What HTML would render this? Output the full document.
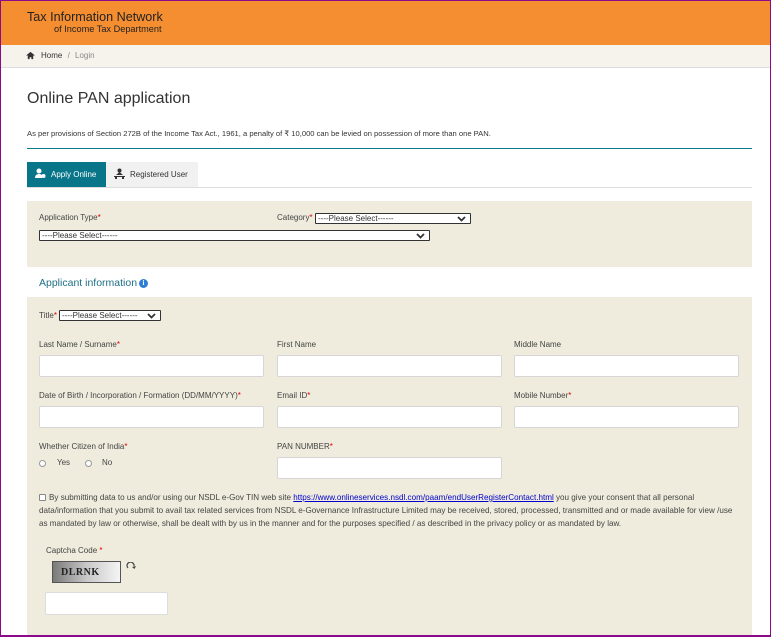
<!DOCTYPE html>
<html><head><meta charset="utf-8"><style>
*{box-sizing:border-box;margin:0;padding:0}
body{width:771px;height:637px;overflow:hidden;background:#fff;font-family:"Liberation Sans",Arial,sans-serif;color:#333;position:relative}
.a{position:absolute}
.frame{position:absolute;left:0;top:0;width:771px;height:637px;border:1px solid #8b0a8b;border-bottom-width:2px;pointer-events:none;z-index:9}
.lbl{position:absolute;font-size:8px;color:#444}
.r{color:#d00}
.inp{position:absolute;height:22px;width:225px;background:#fff;border:1px solid #d6d6d6;border-radius:2px}
.sel{position:absolute;height:11px;border:1px solid #333;background:#fff;font-size:8px;line-height:9px;padding-left:2px;border-radius:1px}
.sel svg{position:absolute;right:4px;top:2px}
</style></head><body>
<div class="a" style="left:0;top:0;width:771px;height:45px;background:#f58e30"></div>
<div class="a" style="left:27px;top:10px;font-size:12.6px;color:#222">Tax Information Network</div>
<div class="a" style="left:54px;top:24px;font-size:9.2px;color:#222">of Income Tax Department</div>
<div class="a" style="left:0;top:45px;width:771px;height:23px;background:#f5f3eb;border-bottom:1px solid #ddd"></div>
<svg class="a" style="left:26px;top:51px" width="9" height="9" viewBox="0 0 10 10"><path d="M0 5L5 1l5 4H8v4H6V7H4v2H2V5z" fill="#333"/></svg>
<div class="a" style="left:41px;top:51px;font-size:8px;color:#333">Home <span style="color:#888;margin:0 3px">/</span> <span style="color:#888">Login</span></div>
<div class="a" style="left:27px;top:90px;font-size:16px;color:#333">Online PAN application</div>
<div class="a" style="left:27px;top:129px;font-size:7.6px;color:#333">As per provisions of Section 272B of the Income Tax Act., 1961, a penalty of ₹ 10,000 can be levied on possession of more than one PAN.</div>
<div class="a" style="left:27px;top:148px;width:725px;height:1px;background:#0b7a8a"></div>
<div class="a" style="left:27px;top:162px;width:79px;height:25px;background:#087589"></div>
<svg class="a" style="left:35px;top:168px" width="11" height="11" viewBox="0 0 11 11"><circle cx="4" cy="3" r="2.5" fill="#fff"/><path d="M0 10c0-3 2-4 4-4s3 1 3 2v2z" fill="#fff"/><circle cx="8.5" cy="8" r="2" fill="#fff"/></svg>
<div class="a" style="left:51px;top:170px;font-size:8px;color:#fff">Apply Online</div>
<div class="a" style="left:106px;top:162px;width:92px;height:25px;background:#f1f1f1"></div>
<svg class="a" style="left:114px;top:168px" width="11" height="11" viewBox="0 0 11 11"><circle cx="5.5" cy="2.5" r="2" fill="#333"/><path d="M2 7l3.5-3 3.5 3zM0 8h11v1H0zM1 9h2v2H1zM8 9h2v2H8z" fill="#333"/></svg>
<div class="a" style="left:130px;top:170px;font-size:8px;color:#333">Registered User</div>
<div class="a" style="left:27px;top:187px;width:725px;height:1px;background:#ddd"></div>
<div class="a" style="left:27px;top:201px;width:725px;height:66px;background:#efecdd"></div>
<div class="lbl" style="left:39px;top:213px">Application Type<span class="r">*</span></div>
<div class="lbl" style="left:277px;top:213px">Category<span class="r">*</span></div>
<div class="sel" style="left:315px;top:213px;width:156px">----Please Select------<svg width="9" height="6" viewBox="0 0 9 6"><path d="M1 1l3.5 3.5L8 1" stroke="#333" stroke-width="1.8" fill="none"/></svg></div>
<div class="sel" style="left:39px;top:230px;width:391px">----Please Select------<svg width="9" height="6" viewBox="0 0 9 6"><path d="M1 1l3.5 3.5L8 1" stroke="#333" stroke-width="1.8" fill="none"/></svg></div>
<div class="a" style="left:39px;top:277px;font-size:10.5px;color:#1d6f86">Applicant information</div>
<div class="a" style="left:139px;top:279px;width:9px;height:9px;border-radius:50%;background:#2d7fd6;color:#fff;font-size:7px;font-weight:bold;text-align:center;line-height:9px;font-family:'Liberation Serif',serif">i</div>
<div class="a" style="left:27px;top:297px;width:725px;height:340px;background:#efecdd"></div>
<div class="lbl" style="left:39px;top:311px">Title<span class="r">*</span></div>
<div class="sel" style="left:59px;top:310px;width:102px">----Please Select------<svg width="9" height="6" viewBox="0 0 9 6"><path d="M1 1l3.5 3.5L8 1" stroke="#333" stroke-width="1.8" fill="none"/></svg></div>
<div class="lbl" style="left:39px;top:340px">Last Name / Surname<span class="r">*</span></div>
<div class="lbl" style="left:277px;top:340px">First Name</div>
<div class="lbl" style="left:514px;top:340px">Middle Name</div>
<div class="inp" style="left:39px;top:355px"></div><div class="inp" style="left:277px;top:355px"></div><div class="inp" style="left:514px;top:355px"></div>
<div class="lbl" style="left:39px;top:391px">Date of Birth / Incorporation / Formation (DD/MM/YYYY)<span class="r">*</span></div>
<div class="lbl" style="left:277px;top:391px">Email ID<span class="r">*</span></div>
<div class="lbl" style="left:514px;top:391px">Mobile Number<span class="r">*</span></div>
<div class="inp" style="left:39px;top:406px"></div><div class="inp" style="left:277px;top:406px"></div><div class="inp" style="left:514px;top:406px"></div>
<div class="lbl" style="left:39px;top:442px">Whether Citizen of India<span class="r">*</span></div>
<div class="lbl" style="left:277px;top:442px">PAN NUMBER<span class="r">*</span></div>
<div class="a" style="left:39px;top:460px;width:7px;height:7px;border:1px solid #999;border-radius:50%;background:#fff"></div>
<div class="lbl" style="left:57px;top:458px">Yes</div>
<div class="a" style="left:85px;top:460px;width:7px;height:7px;border:1px solid #999;border-radius:50%;background:#fff"></div>
<div class="lbl" style="left:102px;top:458px">No</div>
<div class="inp" style="left:277px;top:457px"></div>
<div class="a" style="left:39px;top:494px;width:7px;height:7px;border:1px solid #888;background:#fff;border-radius:1px"></div>
<div class="a" style="left:39px;top:492px;white-space:nowrap;font-size:8.1px;line-height:12.8px;color:#444;text-indent:10px">By submitting data to us and/or using our NSDL e-Gov TIN web site <span style="color:#00c;text-decoration:underline">https://www.onlineservices.nsdl.com/paam/endUserRegisterContact.html</span> you give your consent that all personal<br>data/information that you submit to avail tax related services from NSDL e-Governance Infrastructure Limited may be received, stored, processed, transmitted and or made available for view /use<br>as mandated by law or otherwise, shall be dealt with by us in the manner and for the purposes specified / as described in the privacy policy or as mandated by law.</div>
<div class="lbl" style="left:46px;top:546px">Captcha Code <span class="r">*</span></div>
<div class="a" style="left:52px;top:561px;width:69px;height:22px;border:1px solid #555;background:linear-gradient(90deg,#7a7a7a,#c8c8c8 50%,#f4f4f4);font-family:'Liberation Serif',serif;font-weight:bold;font-size:10px;color:#222;padding:5px 0 0 8px;letter-spacing:.5px">DLRNK</div>
<svg class="a" style="left:126px;top:562px" width="10" height="10" viewBox="0 0 10 10"><path d="M2 6A3.5 3.5 0 1 1 8 4" stroke="#444" stroke-width="1.2" fill="none"/><path d="M6 5l2.5 2L10 4z" fill="#444"/></svg>
<div class="a" style="left:45px;top:592px;width:123px;height:23px;background:#fff;border:1px solid #ddd;border-radius:2px"></div>
<div class="frame"></div>
</body></html>
